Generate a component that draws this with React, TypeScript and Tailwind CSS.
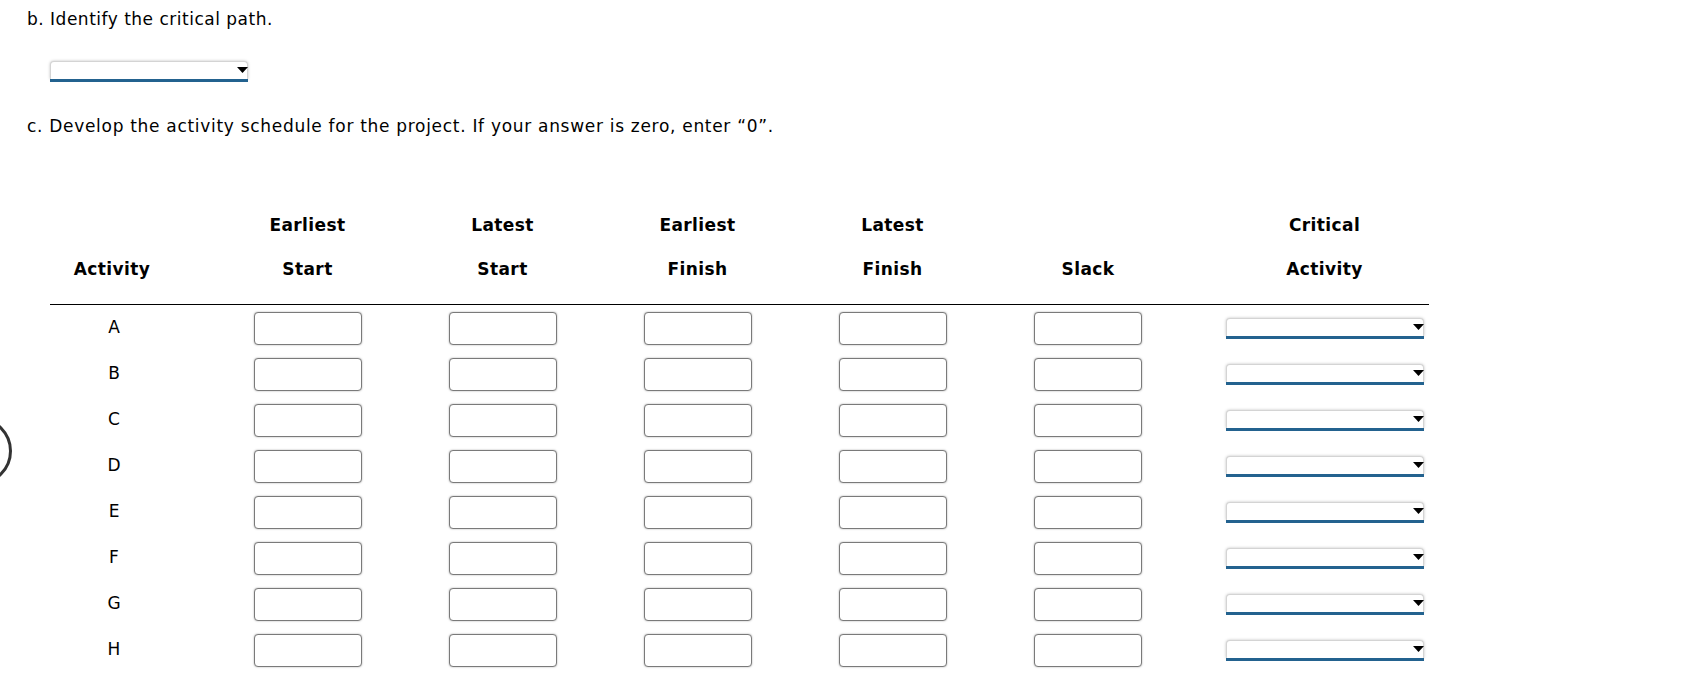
import React from "react";

const rows = ["A", "B", "C", "D", "E", "F", "G", "H"];

const heads = [
  ["Earliest", "Start"],
  ["Latest", "Start"],
  ["Earliest", "Finish"],
  ["Latest", "Finish"],
  ["", "Slack"],
];

const Dropdown = ({ width }: { width: string }) => (
  <div className={`relative ${width} h-[21px]`}>
    <div className="h-[18px] rounded-t-[4px] border border-[#d4d4d4] border-b-0 bg-white shadow-[0_0_3px_rgba(0,0,0,0.25)]" />
    <div className="h-[3px] bg-[#23628f]" />
    <svg
      className="absolute right-0 top-[6px]"
      width="11"
      height="6"
      viewBox="0 0 11 6"
    >
      <path d="M0 0 L11 0 L5.5 6 Z" fill="#000" />
    </svg>
  </div>
);

const Box = () => (
  <div className="w-[108px] h-[33px] rounded-[4px] border border-[#7a7a7a] bg-white shadow-[0_0_2px_rgba(0,0,0,0.35)]" />
);

const App = () => {
  return (
    <div
      className="relative w-[1681px] h-[681px] overflow-hidden bg-white text-black"
      style={{ fontFamily: '"DejaVu Sans", Verdana, sans-serif' }}
    >
      {/* ring peeking in from the left edge */}
      <div className="absolute left-[-56px] top-[417px] w-[68px] h-[68px] rounded-full border-[3px] border-[#333]" />

      <div className="pl-[27px] pt-[8px] text-[17px] tracking-[0.7px]">
        <p className="leading-[22px] tracking-[0.5px]">b. Identify the critical path.</p>
        <div className="pl-[23px] pt-[31px]">
          <Dropdown width="w-[198px]" />
        </div>
        <p className="pt-[33px] leading-[22px]">
          c. Develop the activity schedule for the project. If your answer is
          zero, enter “0”.
        </p>
      </div>

      <div className="ml-[50px] mt-[67px] w-[1379px]">
        <div className="grid grid-cols-[160px_195px_195px_195px_195px_196px_243px] border-b border-black pb-[12px] font-bold text-[17px] tracking-[0.4px]">
          <div className="flex flex-col items-center pr-[36px]">
            <div className="h-[44px]" />
            <div className="h-[44px] flex items-center">Activity</div>
          </div>
          {heads.map((h, i) => (
            <div key={i} className="flex flex-col items-center">
              <div className="h-[44px] flex items-center">{h[0]}</div>
              <div className="h-[44px] flex items-center">{h[1]}</div>
            </div>
          ))}
          <div className="flex flex-col items-center pl-[34px]">
            <div className="h-[44px] flex items-center">Critical</div>
            <div className="h-[44px] flex items-center">Activity</div>
          </div>
        </div>

        {rows.map((r) => (
          <div
            key={r}
            className="grid grid-cols-[160px_195px_195px_195px_195px_196px_243px] h-[46px] items-center text-[17px]"
          >
            <div className="flex justify-center pr-[32px]">{r}</div>
            {[0, 1, 2, 3, 4].map((c) => (
              <div key={c} className="flex justify-center">
                <Box />
              </div>
            ))}
            <div className="flex justify-center pl-[34px]">
              <Dropdown width="w-[198px]" />
            </div>
          </div>
        ))}
      </div>
    </div>
  );
};

export default App;
